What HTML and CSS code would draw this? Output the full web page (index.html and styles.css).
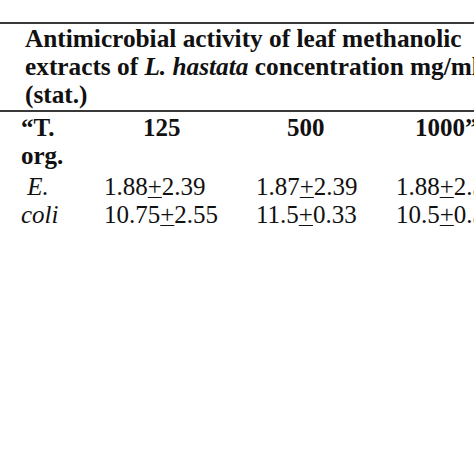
FILE: index.html
```html
<!DOCTYPE html>
<html>
<head>
<meta charset="utf-8">
<link rel="stylesheet" href="styles.css">
</head>
<body>
<div class="page">
  <div class="sheet">
    <div class="title">Antimicrobial activity of leaf methanolic extracts of <i>L. hastata</i> concentration mg/ml (stat.)</div>
    <div class="grid head">
      <div class="org">“T.</div>
      <div class="h2">125</div>
      <div class="h3">500</div>
      <div class="h4">1000”</div>
      <div class="org">org.</div>
      <div></div>
      <div></div>
      <div></div>
    </div>
    <div class="grid data">
      <div class="org"><i>&nbsp;E.</i></div>
      <div>1.88<u>+</u>2.39</div>
      <div>1.87<u>+</u>2.39</div>
      <div>1.88<u>+</u>2.39</div>
      <div class="org"><i>coli</i></div>
      <div>10.75<u>+</u>2.55</div>
      <div>11.5<u>+</u>0.33</div>
      <div>10.5<u>+</u>0.33</div>
    </div>
  </div>
</div>
</body>
</html>
```
FILE: styles.css
```css
html, body {
  margin: 0;
  padding: 0;
  background: #fff;
}
.page {
  width: 474px;
  height: 474px;
  overflow: hidden;
  padding-top: 22px;
  box-sizing: border-box;
}
.sheet {
  width: 560px;
  font-family: "Liberation Serif", "Times New Roman", serif;
  font-size: 25px;
  line-height: 28px;
  color: #111;
}
.title {
  width: 500px;
  border-top: 2px solid #3a3a3a;
  border-bottom: 2px solid #3a3a3a;
  padding: 0 0 2px 25px;
  font-weight: bold;
  font-size: 25.3px;
}
.grid {
  display: grid;
  grid-template-columns: 104px 152px 140px 150px;
  white-space: nowrap;
}
.head {
  font-weight: bold;
  padding-top: 2px;
}
.data {
  padding-top: 3px;
}
.org {
  padding-left: 21px;
}
.h2 { padding-left: 39px; }
.h3 { padding-left: 31px; }
.h4 { padding-left: 19px; }
u {
  text-decoration-thickness: 1px;
  text-underline-offset: 2px;
}
```
